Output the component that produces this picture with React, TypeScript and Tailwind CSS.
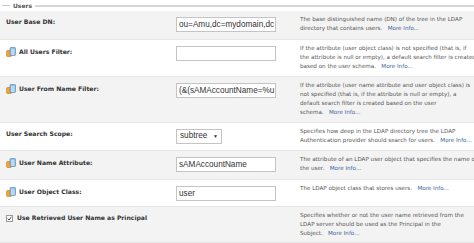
import React from "react";

interface FieldRow {
  label: string;
  icon?: boolean;
  checkbox?: boolean;
  control?: "input" | "select" | "none";
  value?: string;
  desc: string[];
  height: string;
}

const rows: FieldRow[] = [
  {
    label: "User Base DN:",
    control: "input",
    value: "ou=Amu,dc=mydomain,dc",
    desc: [
      "The base distinguished name (DN) of the tree in the LDAP",
      "directory that contains users.",
    ],
    height: "h-[29px]",
  },
  {
    label: "All Users Filter:",
    icon: true,
    control: "input",
    value: "",
    desc: [
      "If the attribute (user object class) is not specified (that is, if",
      "the attribute is null or empty), a default search filter is created",
      "based on the user schema.",
    ],
    height: "h-[37px]",
  },
  {
    label: "User From Name Filter:",
    icon: true,
    control: "input",
    value: "(&(sAMAccountName=%u",
    desc: [
      "If the attribute (user name attribute and user object class) is",
      "not specified (that is, if the attribute is null or empty), a",
      "default search filter is created based on the user",
      "schema.",
    ],
    height: "h-[46px]",
  },
  {
    label: "User Search Scope:",
    control: "select",
    value: "subtree",
    desc: [
      "Specifies how deep in the LDAP directory tree the LDAP",
      "Authentication provider should search for users.",
    ],
    height: "h-[28px]",
  },
  {
    label: "User Name Attribute:",
    icon: true,
    control: "input",
    value: "sAMAccountName",
    desc: [
      "The attribute of an LDAP user object that specifies the name of",
      "the user.",
    ],
    height: "h-[29px]",
  },
  {
    label: "User Object Class:",
    icon: true,
    control: "input",
    value: "user",
    desc: ["The LDAP object class that stores users."],
    height: "h-[27px]",
  },
  {
    label: "Use Retrieved User Name as Principal",
    checkbox: true,
    control: "none",
    desc: [
      "Specifies whether or not the user name retrieved from the",
      "LDAP server should be used as the Principal in the",
      "Subject.",
    ],
    height: "h-[36px]",
  },
];

const LdapIcon = () => (
  <svg width="10" height="10" viewBox="0 0 10 10" className="mr-[3px] shrink-0">
    <rect x="0.5" y="3.5" width="5" height="6" rx="1" fill="#f0a830" stroke="#c07818" strokeWidth="0.6" />
    <rect x="4" y="0.5" width="5.5" height="8" rx="0.8" fill="#8ec0e8" stroke="#4a80b8" strokeWidth="0.6" />
    <line x1="5" y1="3" x2="8.5" y2="3" stroke="#ffffff" strokeWidth="0.8" />
    <line x1="5" y1="5" x2="8.5" y2="5" stroke="#ffffff" strokeWidth="0.8" />
    <line x1="5" y1="7" x2="8.5" y2="7" stroke="#ffffff" strokeWidth="0.8" />
  </svg>
);

const App: React.FC = () => {
  return (
    <div className="w-[474px] h-[243px] overflow-hidden bg-white font-['DejaVu_Sans',sans-serif]">
      {/* fieldset legend */}
      <div className="flex items-center h-[11px] pl-[2px]">
        <div className="w-[8px] h-px bg-[#c8c8c8]" />
        <span className="px-[3px] text-[6px] font-bold text-[#555] leading-none">Users</span>
        <div className="flex-1 h-[2px] bg-[#d6d6d6]" />
      </div>
      {rows.map((row, i) => (
        <div
          key={row.label}
          className={`flex items-start ${row.height} ${i % 2 === 0 ? "bg-[#f3f3f3]" : "bg-white"} border-b border-[#e6e6e6]`}
        >
          <div className="w-[176px] shrink-0 pl-[6px] pt-[7px] flex items-center text-[6.1px] font-bold text-[#333] leading-[8px]">
            {row.icon && <LdapIcon />}
            {row.checkbox && (
              <span className="mr-[4px] w-[7px] h-[7px] border border-[#999] bg-white flex items-center justify-center">
                <svg width="5" height="5" viewBox="0 0 5 5">
                  <path d="M0.6 2.6 L2 4 L4.4 0.8" fill="none" stroke="#333" strokeWidth="0.9" />
                </svg>
              </span>
            )}
            <span>{row.label}</span>
          </div>
          <div className="w-[124px] shrink-0 pt-[6px]">
            {row.control === "input" && (
              <div className="w-[100px] h-[15px] border border-[#c4c4c4] bg-white overflow-hidden whitespace-nowrap px-[2px] text-[8.2px] leading-[13px] text-[#333] font-['Liberation_Sans',sans-serif]">
                {row.value}
              </div>
            )}
            {row.control === "select" && (
              <div className="w-[46px] h-[15px] border border-[#c4c4c4] bg-white flex items-center justify-between px-[3px] text-[8.2px] text-[#333] font-['Liberation_Sans',sans-serif]">
                <span>{row.value}</span>
                <span className="text-[5px]">▼</span>
              </div>
            )}
          </div>
          <div className="flex-1 pt-[4px] text-[5.6px] leading-[9px] text-[#555] whitespace-nowrap">
            {row.desc.map((line, j) => (
              <div key={j}>
                {line}
                {j === row.desc.length - 1 && (
                  <span className="text-[#3a5f9a]">&nbsp;&nbsp;&nbsp;More Info...</span>
                )}
              </div>
            ))}
          </div>
        </div>
      ))}
    </div>
  );
};

export default App;
